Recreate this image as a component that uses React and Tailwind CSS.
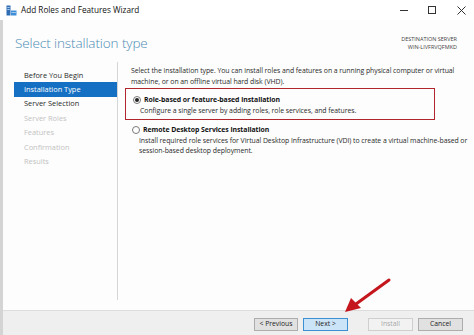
import React from "react";

const font = { fontFamily: '"Open Sans", "Noto Sans", "Liberation Sans", sans-serif' };
const titleFont = { fontFamily: '"Open Sans", "Liberation Sans", sans-serif' };

function Radio({ checked }) {
  return (
    <span className="mt-[1px] flex h-[8px] w-[8px] shrink-0 items-center justify-center rounded-full border border-[#7a7a7a] bg-white">
      {checked && <span className="h-[4px] w-[4px] rounded-full bg-[#222]" />}
    </span>
  );
}

const navItems = [
  { label: "Before You Begin", state: "done" },
  { label: "Installation Type", state: "active" },
  { label: "Server Selection", state: "done" },
  { label: "Server Roles", state: "disabled" },
  { label: "Features", state: "disabled" },
  { label: "Confirmation", state: "disabled" },
  { label: "Results", state: "disabled" },
];

export default function App() {
  return (
    <div className="relative flex h-[335px] w-[474px] flex-col overflow-hidden bg-white text-[#1e1e1e]" style={font}>
      {/* Title bar */}
      <div className="flex h-[20px] items-center bg-white pl-[6px]">
        <svg width="11" height="11" viewBox="0 0 11 11" className="mr-[4px]">
          <rect x="0.5" y="0.5" width="4" height="10" fill="#2f6db5" />
          <rect x="1.3" y="2" width="2.4" height="0.8" fill="#cfe3f7" />
          <rect x="1.3" y="4" width="2.4" height="0.8" fill="#cfe3f7" />
          <rect x="5" y="5.5" width="5.5" height="5" fill="#3f8fd8" />
          <rect x="5.5" y="7" width="4.5" height="1" fill="#9fc6ec" />
        </svg>
        <span className="text-[8.2px] leading-none text-[#111]">Add Roles and Features Wizard</span>
        <div className="ml-auto flex h-full items-center">
          <span className="flex w-[28px] justify-center">
            <span className="h-[1px] w-[8px] bg-[#333]" />
          </span>
          <span className="flex w-[28px] justify-center">
            <span className="h-[8px] w-[8px] border border-[#333]" />
          </span>
          <span className="flex w-[28px] justify-center pl-[2px]">
            <svg width="9" height="9" viewBox="0 0 9 9">
              <path d="M0.5 0.5 L8.5 8.5 M8.5 0.5 L0.5 8.5" stroke="#333" strokeWidth="1" />
            </svg>
          </span>
        </div>
      </div>

      {/* Window body */}
      <div className="flex flex-1 flex-col border-l-[3px] border-[#d4d4d4] bg-[#fdfdfd]">
        {/* Header */}
        <div className="flex h-[42px] items-start justify-between pl-[12px] pr-[17px]">
          <div className="pt-[13px] text-[13.5px] font-light leading-[20px] tracking-[-0.1px] text-[#4b8bb4]" style={titleFont}>
            Select installation type
          </div>
          <div className="pt-[15px] text-right text-[5.5px] leading-[8px] text-[#444]">
            <div>DESTINATION SERVER</div>
            <div>WIN-LIVFRVQFMKD</div>
          </div>
        </div>

        {/* Main */}
        <div className="flex flex-1 pb-[10px]">
          {/* Nav */}
          <div className="flex w-[115px] shrink-0 flex-col border-r border-[#d6d6d6] pl-[11px] pt-[6px]">
            {navItems.map((it) => (
              <div
                key={it.label}
                className={
                  "flex h-[14.4px] items-center pl-[10px] text-[7.4px] " +
                  (it.state === "active"
                    ? "bg-[#1570c4] text-white"
                    : it.state === "disabled"
                    ? "text-[#c2c2c2]"
                    : "text-[#2a2a2a]")
                }
              >
                {it.label}
              </div>
            ))}
          </div>

          {/* Content */}
          <div className="flex flex-1 flex-col pl-[13px] pr-[6px] pt-[3px] text-[6.9px] leading-[11px] tracking-[-0.05px] text-[#2a2a2a]">
            <p>
              Select the installation type. You can install roles and features on a running physical computer or virtual
              machine, or on an offline virtual hard disk (VHD).
            </p>
            <div className="ml-[-6px] mt-[1px] w-[310px] border-[1.5px] border-[#b0262c] px-[7px] pb-[2px] pt-[6px]">
              <div className="flex items-start gap-[3px]">
                <Radio checked />
                <span className="font-bold leading-[10px] text-[#111]">Role-based or feature-based installation</span>
              </div>
              <div className="pl-[7px] leading-[12px]">Configure a single server by adding roles, role services, and features.</div>
            </div>
            <div className="mt-[5px] flex items-start gap-[3px] pl-[1px]">
              <Radio />
              <span className="font-bold leading-[10px] text-[#111]">Remote Desktop Services installation</span>
            </div>
            <p className="pl-[8px] pt-[1px] leading-[10px]">
              Install required role services for Virtual Desktop Infrastructure (VDI) to create a virtual machine-based
              or session-based desktop deployment.
            </p>
          </div>
        </div>

        {/* Footer */}
        <div className="flex h-[25px] items-center gap-[5px] border-t border-[#dcdcdc] bg-[#efefef] pl-[251px] pt-[2px]">
          <button className="h-[13px] w-[44px] border border-[#adadad] bg-[#e1e1e1] text-[6.8px] leading-none text-[#222]">
            &lt; Previous
          </button>
          <button className="h-[13px] w-[45px] border border-[#3c8fd3] bg-[#cce4f7] text-[6.8px] leading-none text-[#222]">
            Next &gt;
          </button>
          <button className="ml-[15px] h-[13px] w-[45px] border border-[#cfcfcf] bg-[#f2f2f2] text-[6.8px] leading-none text-[#a8a8a8]">
            Install
          </button>
          <button className="h-[13px] w-[45px] border border-[#adadad] bg-[#e1e1e1] text-[6.8px] leading-none text-[#222]">
            Cancel
          </button>
        </div>
      </div>

      {/* Red arrow annotation */}
      <svg className="pointer-events-none absolute left-0 top-0" width="474" height="335" viewBox="0 0 474 335">
        <path d="M389 280 L356 304" stroke="#c4161c" strokeWidth="3" strokeLinecap="round" />
        <path d="M345 312 L351 298 L361 308 Z" fill="#c4161c" />
      </svg>
    </div>
  );
}
